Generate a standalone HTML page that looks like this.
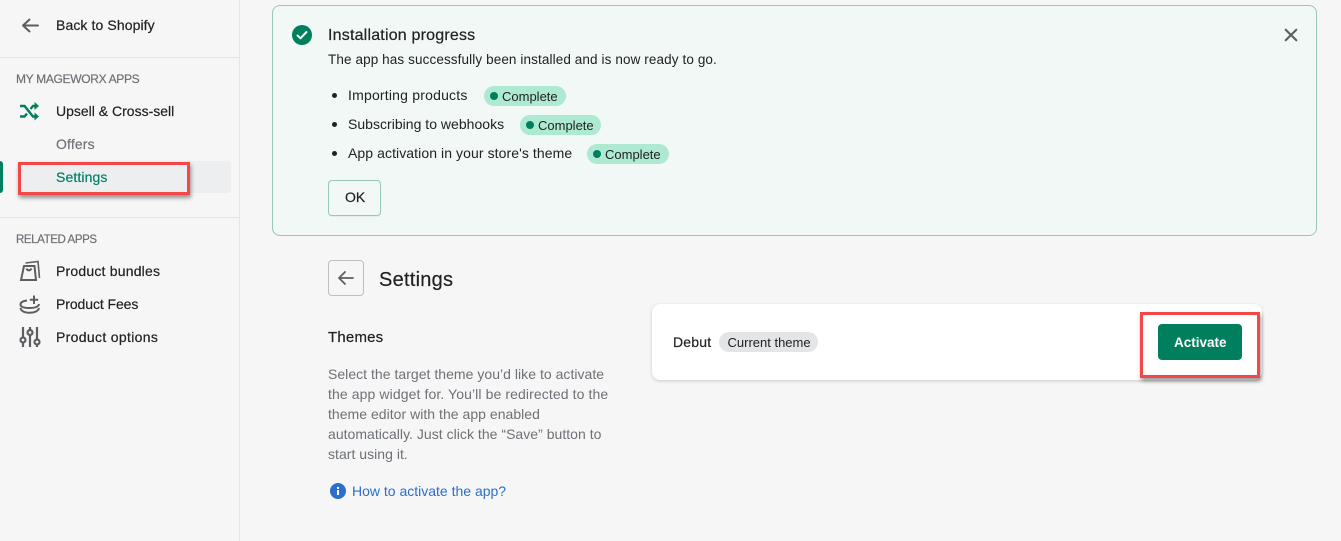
<!DOCTYPE html>
<html><head><meta charset="utf-8"><style>
html,body{margin:0;padding:0;width:1341px;height:541px;overflow:hidden;background:#f6f6f7}
body{position:relative;font-family:"Liberation Sans",sans-serif;font-size:14px;color:#202223}
.t{position:absolute;white-space:nowrap;line-height:20px}
.m{-webkit-text-stroke:.2px currentColor}
.b{position:absolute;box-sizing:border-box}
.pill{position:absolute;height:20px;background:#aee9d1;border-radius:10px}
.pill i{position:absolute;left:6px;top:6px;width:8px;height:8px;border-radius:50%;background:#007f5f}
.pill span{position:absolute;left:18px;top:1px;line-height:20px;font-size:13px;white-space:nowrap;color:#202223}
svg{position:absolute;overflow:visible}
</style></head><body>
<div class="b" style="left:0;top:0;width:240px;height:541px;background:#f6f6f7;border-right:1px solid #e4e5e7"></div>
<div class="b" style="left:0;top:57px;width:239px;height:1px;background:#e1e3e5"></div>
<div class="b" style="left:0;top:217px;width:239px;height:1px;background:#e1e3e5"></div>
<svg style="left:21px;top:16px" width="20" height="20" viewBox="0 0 20 20" fill="none" stroke="#5c5f62" stroke-width="2" stroke-linecap="round" stroke-linejoin="round"><path d="M2 9.500H17M8.500 3.500L2 9.500L8.500 15.500"/></svg>
<div class="t m" style="left:56px;top:15px;letter-spacing:.1px">Back to Shopify</div>
<div class="t m" style="left:16px;top:69px;font-size:12px;color:#6d7175;letter-spacing:-.32px">MY MAGEWORX APPS</div>
<svg style="left:19px;top:101px" width="21" height="20" viewBox="0 0 21 20" fill="none" stroke="#007f5f" stroke-width="2.400"><path d="M1 5H5.500L14 15.500H18M1 15.500H5.500L8 12.500M11.500 8L14 5H18"/><path d="M15.500 1L20 5L15.500 9ZM15.500 11.500L20 15.500L15.500 19.500Z" fill="#007f5f" stroke="none"/></svg>
<div class="t m" style="left:56px;top:101px">Upsell &amp; Cross-sell</div>
<div class="t m" style="left:56px;top:134px;color:#6d7175;letter-spacing:.15px">Offers</div>
<div class="b" style="left:18px;top:161px;width:213px;height:32px;background:#edeeef;border-radius:4px"></div>
<div class="b" style="left:0;top:161px;width:3px;height:32px;background:#008060;border-radius:0 3px 3px 0"></div>
<div class="t m" style="left:56px;top:167px;color:#007f6a;letter-spacing:.12px">Settings</div>
<div class="b" style="left:18px;top:162px;width:172px;height:33px;border:3px solid #f44747;box-shadow:1px 3px 4px rgba(0,0,0,.4)"></div>
<div class="t m" style="left:16px;top:229.500px;font-size:11.500px;color:#6d7175;letter-spacing:-.4px">RELATED APPS</div>
<svg style="left:19px;top:260px" width="22" height="22" viewBox="0 0 22 22" fill="none" stroke="#5c5f62" stroke-width="2"><path d="M5 6H15.500L17 20H2Z"/><path d="M6.500 3L19 1.500L20.500 18" stroke-width="1.600"/><path d="M7.500 8.500C8.500 11 11 11 12.500 8.500" stroke-width="2"/></svg>
<div class="t m" style="left:56px;top:261px;letter-spacing:.2px">Product bundles</div>
<svg style="left:19px;top:294px" width="22" height="22" viewBox="0 0 22 22" fill="none" stroke="#5c5f62" stroke-width="2"><path d="M15 1.500V10M10.800 5.800H19.200"/><path d="M8 6.500C4 7 1.500 8.500 1.500 10.500C1.500 13 5.500 14 10.500 14C15.500 14 19.500 13 20 10"/><path d="M1.500 14C2 17 5.500 18.800 10.500 18.800C15.500 18.800 19.500 17 20 14"/></svg>
<div class="t m" style="left:56px;top:294px;letter-spacing:-.08px">Product Fees</div>
<svg style="left:19px;top:326px" width="22" height="22" viewBox="0 0 22 22" fill="none" stroke="#5c5f62" stroke-width="2.200"><path d="M4 1V11.500M4 16.500V21M11 1V4M11 9V21M18 1V13.500M18 18.500V21"/><circle cx="4" cy="14" r="2.500"/><circle cx="11" cy="6.500" r="2.500"/><circle cx="18" cy="16" r="2.500"/></svg>
<div class="t m" style="left:56px;top:327px;letter-spacing:.33px">Product options</div>

<div class="b" style="left:272px;top:5px;width:1045px;height:231px;background:#f1f8f5;border:1px solid #95c9b4;border-radius:8px"></div>
<svg style="left:292px;top:25px" width="20" height="20" viewBox="0 0 20 20"><circle cx="10" cy="10" r="10" fill="#007f5f"/><path d="M5.500 10.500L8.500 13.300L14.500 7" fill="none" stroke="#fff" stroke-width="2" stroke-linecap="round" stroke-linejoin="round"/></svg>
<div class="t m" style="left:328px;top:26px;font-size:16px;letter-spacing:.2px">Installation progress</div>
<div class="t" style="left:328px;top:50px;font-size:13.500px;letter-spacing:.11px">The app has successfully been installed and is now ready to go.</div>
<svg style="left:1285px;top:29px" width="12" height="12" viewBox="0 0 12 12" stroke="#5c5f62" stroke-width="2.100" stroke-linecap="round"><path d="M.7 .7L11.300 11.300M11.300 .7L.7 11.300"/></svg>
<div class="b" style="left:331.500px;top:92.500px;width:5px;height:5px;border-radius:50%;background:#202223"></div>
<div class="t" style="left:348px;top:85px;letter-spacing:.2px">Importing products</div>
<div class="pill" style="left:484px;top:86px;width:82px"><i></i><span>Complete</span></div>
<div class="b" style="left:331.500px;top:121.500px;width:5px;height:5px;border-radius:50%;background:#202223"></div>
<div class="t" style="left:348px;top:114px;letter-spacing:.02px">Subscribing to webhooks</div>
<div class="pill" style="left:520px;top:115px;width:81px"><i></i><span>Complete</span></div>
<div class="b" style="left:331.500px;top:150.500px;width:5px;height:5px;border-radius:50%;background:#202223"></div>
<div class="t" style="left:348px;top:143px;letter-spacing:.08px">App activation in your store's theme</div>
<div class="pill" style="left:587px;top:144px;width:82px"><i></i><span>Complete</span></div>
<div class="b" style="left:328px;top:180px;width:53px;height:36px;border:1px solid #95c9b4;border-radius:4px;box-shadow:0 1px 0 rgba(0,0,0,.05)"></div>
<div class="t m" style="left:345px;top:187px">OK</div>

<div class="b" style="left:328px;top:260px;width:36px;height:36px;border:1px solid #babfc3;border-radius:4px"></div>
<svg style="left:338px;top:270px" width="16" height="16" viewBox="0 0 16 16" fill="none" stroke="#5c5f62" stroke-width="1.800" stroke-linecap="round" stroke-linejoin="round"><path d="M1 8H15M7 2L1 8L7 14"/></svg>
<div class="t m" style="left:379px;top:268px;font-size:20px;line-height:24px;letter-spacing:.25px">Settings</div>
<div class="t m" style="left:328px;top:328px;font-size:15px;letter-spacing:.2px">Themes</div>
<div class="t" style="left:328px;top:364px;color:#6d7175;letter-spacing:.03px">Select the target theme you’d like to activate</div>
<div class="t" style="left:328px;top:384px;color:#6d7175;letter-spacing:.1px">the app widget for. You’ll be redirected to the</div>
<div class="t" style="left:328px;top:404px;color:#6d7175;letter-spacing:.03px">theme editor with the app enabled</div>
<div class="t" style="left:328px;top:424px;color:#6d7175;letter-spacing:.03px">automatically. Just click the “Save” button to</div>
<div class="t" style="left:328px;top:444px;color:#6d7175;letter-spacing:.03px">start using it.</div>
<svg style="left:330px;top:483px" width="16" height="16" viewBox="0 0 16 16"><circle cx="8" cy="8" r="8" fill="#2c6ecb"/><rect x="7" y="7" width="2" height="5" fill="#fff"/><rect x="7" y="4" width="2" height="2" fill="#fff"/></svg>
<div class="t" style="left:352px;top:481px;color:#2c6ecb">How to activate the app?</div>

<div class="b" style="left:652px;top:304px;width:610px;height:76px;background:#fff;border-radius:8px;box-shadow:0 1px 3px rgba(23,24,24,.2)"></div>
<div class="t m" style="left:673px;top:332px;letter-spacing:.2px">Debut</div>
<div class="b" style="left:719px;top:332px;width:99px;height:20px;background:#e4e5e7;border-radius:10px"></div>
<div class="t" style="left:727.500px;top:332.500px;font-size:13px">Current theme</div>
<div class="b" style="left:1158px;top:324px;width:84px;height:36px;background:#007f5f;border-radius:4px"></div>
<div class="t" style="left:1174px;top:332.500px;color:#fff;font-weight:bold;font-size:13.500px">Activate</div>
<div class="b" style="left:1140px;top:312px;width:120px;height:66px;border:3px solid #f44747;box-shadow:1px 3px 4px rgba(0,0,0,.4)"></div>
</body></html>
